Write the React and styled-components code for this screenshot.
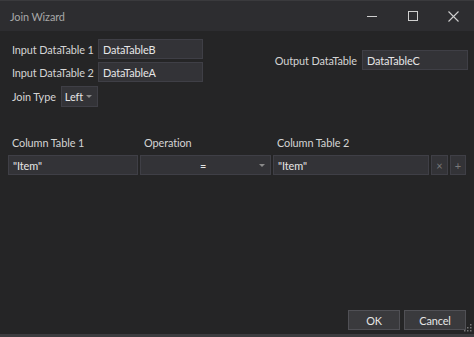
import React, { useState } from 'react';
import styled, { createGlobalStyle } from 'styled-components';

const Global = createGlobalStyle`
    html, body { margin: 0; padding: 0; background: #252526; }
    body { font-family: Lato, "Noto Sans", sans-serif; }
`

const Window = styled.div`
    width: 474px;
    height: 337px;
    display: flex;
    flex-direction: column;
    background: #252526;
    color: #d4d4d4;
    font-size: 10.9px;
    letter-spacing: -0.1px;
    overflow: hidden;
`

const TitleBar = styled.div`
    height: 31px;
    flex-shrink: 0;
    display: flex;
    align-items: center;
    background: #2d2d30;
    border-top: 1px solid #3a3a3d;
    box-sizing: border-box;
`

const Title = styled.div`
    flex: 1;
    padding-left: 10px;
    color: #a8a8a8;
`

const WinButton = styled.div`
    width: 41px;
    height: 30px;
    display: flex;
    align-items: center;
    justify-content: center;
`

const Body = styled.div`
    flex: 1;
    display: flex;
    flex-direction: column;
    padding: 8px 8px 0 8px;
`

const Top = styled.div`
    display: flex;
    justify-content: space-between;
`

const InputsGrid = styled.div`
    display: grid;
    grid-template-columns: 84px 105px;
    column-gap: 6px;
    row-gap: 3px;
    align-items: center;
`

const Label = styled.div`
    padding-left: 4px;
    white-space: nowrap;
`

const TextBox = styled.div`
    height: 20px;
    box-sizing: border-box;
    display: flex;
    align-items: center;
    padding-left: 4px;
    background: #333337;
    border: 1px solid #3f3f46;
    color: #e6e6e6;
    width: ${p => p.width || 'auto'};
`

const JoinRow = styled.div`
    display: flex;
    align-items: center;
    gap: 5px;
    margin-top: 4px;
`

const Combo = styled.div`
    width: 37px;
    height: 21px;
    box-sizing: border-box;
    display: flex;
    align-items: center;
    justify-content: space-between;
    background: #333337;
    border: 1px solid #3f3f46;
    padding: 0 5px 0 3px;
    color: #e6e6e6;
`

const Arrow = styled.span`
    width: 0;
    height: 0;
    border-left: 3px solid transparent;
    border-right: 3px solid transparent;
    border-top: 3px solid #8a8a8a;
`

const OutputRow = styled.div`
    display: flex;
    align-items: center;
    gap: 5px;
    margin-top: 11px;
    align-self: flex-start;
    margin-right: -2px;
`

const ColumnGrid = styled.div`
    display: grid;
    grid-template-columns: 130px 131px 156px 17px 16px;
    column-gap: 2px;
    row-gap: 6px;
    margin-top: 29px;
`

const Header = styled.div`
    padding-left: 4px;
    white-space: nowrap;
`

const OpBox = styled.div`
    height: 20px;
    box-sizing: border-box;
    display: flex;
    align-items: center;
    background: #333337;
    border: 1px solid #3f3f46;
    padding-right: 5px;
    color: #e6e6e6;
`

const OpText = styled.span`
    flex: 1;
    text-align: center;
    padding-left: 6px;
`

const SmallButton = styled.div`
    height: 20px;
    box-sizing: border-box;
    display: flex;
    align-items: center;
    justify-content: center;
    background: #333337;
    border: 1px solid #3f3f46;
    color: #7a7a7a;
    font-size: 11px;
`

const Footer = styled.div`
    margin-top: auto;
    display: flex;
    justify-content: flex-end;
    gap: 4px;
    padding-bottom: 4px;
    position: relative;
`

const Button = styled.div`
    width: ${p => p.width}px;
    height: 20px;
    box-sizing: border-box;
    display: flex;
    align-items: center;
    justify-content: center;
    background: #3a3a3d;
    border: 1px solid #505055;
    color: #e6e6e6;
`

const Grip = styled.svg`
    position: absolute;
    right: -6px;
    bottom: 2px;
`

const BottomStrip = styled.div`
    height: 3px;
    flex-shrink: 0;
    background: #3c3c3f;
`

export default function App() {
    const [rows] = useState([{ left: '"Item"', op: '=', right: '"Item"' }])

    return (
        <Window>
            <Global />
            <TitleBar>
                <Title>Join Wizard</Title>
                <WinButton>
                    <svg width="10" height="10" viewBox="0 0 10 10">
                        <line x1="0" y1="5.5" x2="10" y2="5.5" stroke="#cfcfcf" strokeWidth="1" />
                    </svg>
                </WinButton>
                <WinButton>
                    <svg width="10" height="10" viewBox="0 0 10 10">
                        <rect x="0.5" y="0.5" width="9" height="9" fill="none" stroke="#cfcfcf" strokeWidth="1" />
                    </svg>
                </WinButton>
                <WinButton>
                    <svg width="11" height="11" viewBox="0 0 11 11">
                        <path d="M0.5 0.5 L10.5 10.5 M10.5 0.5 L0.5 10.5" stroke="#cfcfcf" strokeWidth="1.1" />
                    </svg>
                </WinButton>
            </TitleBar>
            <Body>
                <Top>
                    <div>
                        <InputsGrid>
                            <Label>Input DataTable 1</Label>
                            <TextBox>DataTableB</TextBox>
                            <Label>Input DataTable 2</Label>
                            <TextBox>DataTableA</TextBox>
                        </InputsGrid>
                        <JoinRow>
                            <Label>Join Type</Label>
                            <Combo>Left<Arrow /></Combo>
                        </JoinRow>
                    </div>
                    <OutputRow>
                        <span>Output DataTable</span>
                        <TextBox width="106px">DataTableC</TextBox>
                    </OutputRow>
                </Top>
                <ColumnGrid>
                    <Header>Column Table 1</Header>
                    <Header>Operation</Header>
                    <Header>Column Table 2</Header>
                    <div />
                    <div />
                    {rows.map((r, i) => (
                        <React.Fragment key={i}>
                            <TextBox>{r.left}</TextBox>
                            <OpBox><OpText>{r.op}</OpText><Arrow /></OpBox>
                            <TextBox>{r.right}</TextBox>
                            <SmallButton>×</SmallButton>
                            <SmallButton>+</SmallButton>
                        </React.Fragment>
                    ))}
                </ColumnGrid>
                <Footer>
                    <Button width={52}>OK</Button>
                    <Button width={62}>Cancel</Button>
                    <Grip width="8" height="8" viewBox="0 0 8 8">
                        <rect x="6" y="0" width="1.5" height="1.5" fill="#777" />
                        <rect x="3" y="3" width="1.5" height="1.5" fill="#777" />
                        <rect x="6" y="3" width="1.5" height="1.5" fill="#777" />
                        <rect x="0" y="6" width="1.5" height="1.5" fill="#777" />
                        <rect x="3" y="6" width="1.5" height="1.5" fill="#777" />
                        <rect x="6" y="6" width="1.5" height="1.5" fill="#777" />
                    </Grip>
                </Footer>
            </Body>
            <BottomStrip />
        </Window>
    )
}
